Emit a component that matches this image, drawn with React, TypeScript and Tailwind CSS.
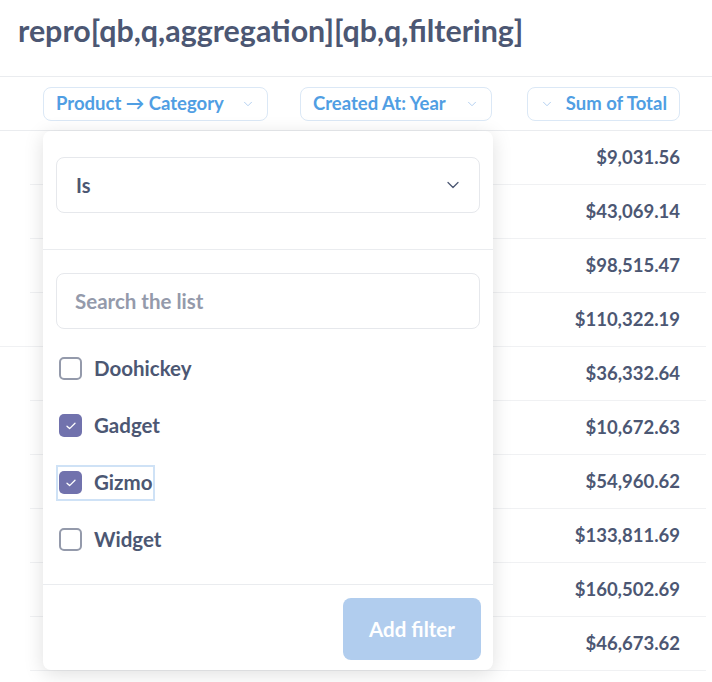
import { ChevronDown } from "lucide-react";

const FONT = { fontFamily: "Lato, 'Open Sans', sans-serif" };

const totals = [
  "$9,031.56",
  "$43,069.14",
  "$98,515.47",
  "$110,322.19",
  "$36,332.64",
  "$10,672.63",
  "$54,960.62",
  "$133,811.69",
  "$160,502.69",
  "$46,673.62",
];

const options = [
  { label: "Doohickey", checked: false, focus: false },
  { label: "Gadget", checked: true, focus: false },
  { label: "Gizmo", checked: true, focus: true },
  { label: "Widget", checked: false, focus: false },
];

function Pill({ label, chevronLeft, className }: { label: string; chevronLeft?: boolean; className?: string }) {
  return (
    <div
      className={`flex h-[34px] items-center gap-3 rounded-lg border border-[#dbe8f6] px-3 text-[18.5px] font-bold text-[#509ee3] ${className ?? ""}`}
    >
      {chevronLeft && <ChevronDown size={14} strokeWidth={1.5} className="text-[#a9c9ee]" />}
      <span>{label}</span>
      {!chevronLeft && <ChevronDown size={14} strokeWidth={1.5} className="ml-auto text-[#a9c9ee]" />}
    </div>
  );
}

function Checkbox({ checked }: { checked: boolean }) {
  if (checked) {
    return (
      <span className="flex h-[23px] w-[23px] items-center justify-center rounded-[5px] bg-[#7172ad]">
        <svg width="10" height="8" viewBox="0 0 10 8" fill="none">
          <path d="M1 4.2 3.6 6.6 9 1.2" stroke="white" strokeWidth="1.3" strokeLinecap="round" strokeLinejoin="round" />
        </svg>
      </span>
    );
  }
  return <span className="h-[23px] w-[23px] rounded-[5px] border-2 border-[#949aab] bg-white" />;
}

function FilterPopover() {
  return (
    <div className="absolute left-[43px] top-[131px] flex h-[539px] w-[450px] flex-col rounded-lg bg-white shadow-[0_4px_20px_rgba(0,0,0,0.13)]">
      <div className="px-[13px] pb-9 pt-[26px]">
        <div className="flex h-[56px] items-center justify-between rounded-lg border border-[#e6e8ec] pl-[19px] pr-[16px]">
          <span className="text-[20px] font-bold text-[#4c5773]">Is</span>
          <ChevronDown size={20} strokeWidth={1.5} className="text-[#4c5773]" />
        </div>
      </div>
      <div className="border-t border-[#eaecef] px-[13px] pt-[23px]">
        <div className="flex h-[56px] items-center rounded-lg border border-[#e6e8ec] pl-[18px]">
          <span className="text-[20.5px] font-bold text-[#949aab]">Search the list</span>
        </div>
        <div className="mt-[11px] flex flex-col pb-[16px]">
          {options.map((o) => (
            <div key={o.label} className="flex h-[57px] items-center">
              <div
                className={`flex h-[36px] items-center gap-[12px] pl-[1px] pr-[1px] ${
                  o.focus ? "border-2 border-[#cfe2f6]" : "border-2 border-transparent"
                }`}
              >
                <Checkbox checked={o.checked} />
                <span className="text-[20.5px] font-bold text-[#4c5773]">{o.label}</span>
              </div>
            </div>
          ))}
        </div>
      </div>
      <div className="flex flex-1 items-start justify-end border-t border-[#eaecef] px-[12px] pt-[13px]">
        <div className="flex h-[62px] w-[138px] items-center justify-center rounded-lg bg-[#b1cdee] text-[20.5px] font-bold text-white">
          Add filter
        </div>
      </div>
    </div>
  );
}

export default function App() {
  return (
    <div className="relative h-[682px] w-[712px] overflow-hidden bg-white" style={FONT}>
      <div className="flex h-[77px] items-start border-b border-[#eaecef] pl-[18px] pt-[12px]">
        <h1 className="text-[30.4px] font-bold leading-[36px] text-[#4c5773]">repro[qb,q,aggregation][qb,q,filtering]</h1>
      </div>
      <div className="flex h-[54px] items-center border-b border-[#eaecef] pl-[43px] pr-[32px]">
        <div className="w-[257px]">
          <Pill label="Product → Category" className="w-[225px]" />
        </div>
        <div className="w-[225px]">
          <Pill label="Created At: Year" className="w-[192px]" />
        </div>
        <div className="flex flex-1 justify-end">
          <Pill label="Sum of Total" chevronLeft />
        </div>
      </div>
      <div className="flex flex-col">
        {totals.map((t, i) => (
          <div
            key={t}
            className={`flex h-[54px] items-center justify-end border-b border-[#f0f1f3] pr-[26px] ${
              i === 3 ? "ml-0" : "ml-[30px]"
            } mr-[6px]`}
          >
            <span className="text-[18.5px] font-bold text-[#4c5773]">{t}</span>
          </div>
        ))}
      </div>
      <FilterPopover />
    </div>
  );
}
